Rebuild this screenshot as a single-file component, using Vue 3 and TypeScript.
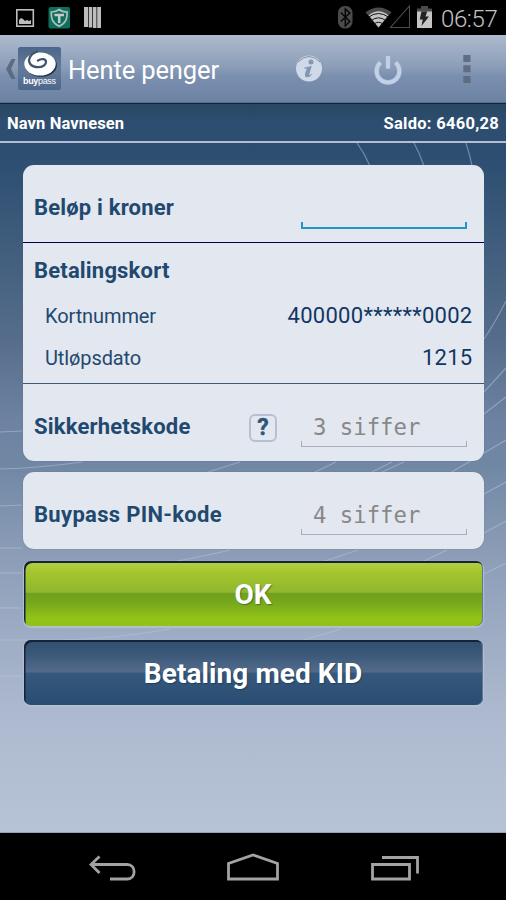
<script setup lang="ts">
import { ref } from 'vue'

const amount = ref('')
const cvc = ref('')
const pin = ref('')
const card = [
  { label: 'Kortnummer', value: '400000******0002' },
  { label: 'Utløpsdato', value: '1215' },
]
const arcs: string[] = [
  'M357 0Q365 11 370 23', 'M414 0Q420 11 424 23', 'M466 0Q470 12 472 23',
  'M506 158Q495 180 484 196', 'M506 225L484 249', 'M506 254L484 271',
  'M506 297L450 330', 'M506 339L484 351', 'M506 378L484 390', 'M506 420L484 431',
  'M336 319L313 330', 'M392 319L370 330', 'M404 319L380 330', 'M240 319L205 330',
  'M0 289L22 288', 'M0 326Q40 325 82 319', 'M0 363L22 362', 'M0 405H22',
  'M230 407Q205 413 172 419', 'M358 407L322 419', 'M447 407L422 419',
  'M0 430H22', 'M0 465H22', 'M0 497H65Q120 495 170 486', 'M341 486L300 498', 'M0 533H22',
]
</script>

<template>
  <div class="screen">
    <header class="status">
      <svg class="status-left" width="110" height="35" viewBox="0 0 110 35">
        <rect x="16.8" y="9.8" width="16.5" height="16.4" fill="none" stroke="#bdbdbd" stroke-width="1.6" />
        <path d="M19 24V20l2-2 2 1 2 2 2-1 2 1 2-1v4z" fill="#bdbdbd" />
        <rect x="48.5" y="7" width="21.5" height="21.5" rx="2" fill="#0d705e" />
        <path d="M59.2 9.5C56 12 53 12 51.2 12c0 6.500 1 11 8 14.300 7-3.300 8-7.800 8-14.300C65 12 62 12 59.200 9.500z" fill="none" stroke="#b3bdbb" stroke-width="1.7" />
        <path d="M54.500 15h9.500M59.200 15v8" stroke="#c4cbc9" stroke-width="2.500" />
        <path d="M84 7h4v20h-4zM88.700 7h3.600v20.500h-3.600zM93 7h3.500v21H93zM97.200 7h3.800v21h-3.800z" fill="#bdbdbd" />
      </svg>
      <div class="status-right">
        <svg width="100" height="35" viewBox="0 0 100 35">
          <rect x="1" y="6" width="14.500" height="22.500" rx="6.500" fill="#4b4b4b" />
          <path d="M3.800 12.500l9 9-4.500 4.200V9l4.500 4-9 8.500" fill="none" stroke="#080808" stroke-width="1.500" />
          <path d="M28.500 12.300Q41.500 2.500 54.500 12.300L41.500 27.500z" fill="#4b4b4b" />
          <path d="M31.700 15.200Q41.500 7.500 51.300 15.200L41.500 27.500z" fill="#c4c4c4" />
          <path d="M31 17.500Q41.500 9.500 52 17.500M33 21.500Q41.500 14 50 21.500M37 24Q41.500 20.500 46 24" fill="none" stroke="#111" stroke-width="1" />
          <path d="M53.500 27.500H72.500V6z" fill="none" stroke="#4b4b4b" stroke-width="1.100" />
          <path d="M84 6h7v2.500h4V12H80V8.500h4z" fill="#4b4b4b" />
          <path d="M80 11.500h15V28H80z" fill="#c4c4c4" />
          <path d="M84.500 11.500h5.700l-1.700 5h3.500l-7.500 9.500 1.200-6.500h-3z" fill="#222" />
        </svg>
        <span class="clock">06:57</span>
      </div>
    </header>

    <nav class="action-bar">
      <svg class="up" width="11" height="22" viewBox="0 0 11 22"><path d="M5.500 1H9.500L5 11l4.500 10H5.500L0 11z" fill="#5d6b80" /></svg>
      <svg class="logo" width="43" height="43" viewBox="0 0 43 43">
        <defs><linearGradient id="tile" x2="0" y2="1"><stop stop-color="#4d6588" /><stop offset=".5" stop-color="#637b9b" /><stop offset="1" stop-color="#4e678a" /></linearGradient></defs>
        <rect width="43" height="43" rx="2.500" fill="url(#tile)" />
        <ellipse cx="23.200" cy="18.200" rx="15.700" ry="11.600" fill="#24344a" />
        <ellipse cx="22" cy="17" rx="15.700" ry="11.500" fill="#fff" />
        <path d="M19 4.500C12 7.500 10 12 11.500 15.500c2 5 10 6 14.500 3 3-2.200 2.500-5.500-.5-6.300-2-.5-4 .3-5.500 1.300" fill="none" stroke="#40546f" stroke-width="2.300" stroke-linecap="round" />
        <text x="5" y="37" fill="#fff" class="logo-text" textLength="33"><tspan class="heavy">buy</tspan>pass</text>
      </svg>
      <h1>Hente penger</h1>
      <svg class="info" width="28" height="28" viewBox="0 0 28 28">
        <circle cx="14" cy="14.500" r="13" fill="#cfd9e7" />
        <path d="M3 8Q14-3 25 8" fill="none" stroke="#64748b" stroke-width=".7" />
        <circle cx="16" cy="8" r="2.500" fill="#8497b1" />
        <path d="M9.500 13.500q4-1 7.300-1.500l-2.600 8.500q0 1.500 3.300-1.200-2 4-5.500 4-3-.2-1.800-4l1.600-4.800H9z" fill="#8497b1" />
      </svg>
      <svg class="power" width="30" height="30" viewBox="0 0 30 30">
        <path d="M7.500 7.500a11.400 11.400 0 1 0 15 0M15 1v12.500" fill="none" stroke="#a5bfe2" stroke-width="4.600" />
        <path d="M7.500 7.500a11.400 11.400 0 1 0 15 0M15 1v12.500" fill="none" stroke="#c4d1e4" stroke-width="3.600" />
      </svg>
      <svg class="more" width="8" height="28" viewBox="0 0 8 28"><path d="M.3 0h7.200v7H.3zM.3 10.200h7.200v7H.3zM.3 21h7.200v7H.3z" fill="#5f6d82" /></svg>
    </nav>

    <div class="account">
      <span class="name">Navn Navnesen</span>
      <span class="balance">Saldo: 6460,28</span>
    </div>

    <main class="content">
      <svg class="arcs" width="506" height="690" viewBox="0 0 506 690">
        <path v-for="d in arcs" :key="d" :d="d" />
      </svg>
      <form class="form" @submit.prevent>
        <section class="panel">
          <label class="row amount">
            <b class="l-amount">Beløp i kroner</b>
            <span class="field active"><input v-model="amount" /></span>
          </label>
          <div class="card-info">
            <h2>Betalingskort</h2>
            <div v-for="item in card" :key="item.label" class="detail">
              <span>{{ item.label }}</span><span class="value">{{ item.value }}</span>
            </div>
          </div>
          <div class="row code">
            <b class="l-code">Sikkerhetskode</b>
            <button class="help" type="button">?</button>
            <span class="field"><input v-model="cvc" placeholder="3 siffer" /></span>
          </div>
        </section>
        <section class="panel">
          <label class="row pin">
            <b class="l-pin">Buypass PIN-kode</b>
            <span class="field"><input v-model="pin" placeholder="4 siffer" /></span>
          </label>
        </section>
        <button class="btn ok" type="button"><span>OK</span></button>
        <button class="btn kid" type="button"><span>Betaling med KID</span></button>
      </form>
    </main>

    <footer class="navbar">
      <svg width="506" height="67" viewBox="0 0 506 67" fill="none" stroke="#a3a3a3" stroke-width="2.800">
        <path d="M91 31.500H127c9.500 0 9.500 14.500 0 14.500H110M99.500 23.500L91 31.500l8.500 8.500" />
        <path d="M228.500 46V30.500L253 22l24.500 8.500V46z" />
        <path d="M372.500 31.500h37V46h-37zM382 24.500h35.500V40.500" />
      </svg>
    </footer>
  </div>
</template>

<style>
body { margin: 0; background: #000; }
</style>

<style scoped>
* { box-sizing: border-box; }
.screen { width: 506px; height: 900px; display: flex; flex-direction: column; overflow: hidden; font-family: Roboto, "Liberation Sans", sans-serif; background: #000; }
.status { height: 35px; display: flex; justify-content: space-between; flex: none; }
.status-right { display: flex; width: 169px; }
.status-right svg { flex: none; }
.clock { flex: 1; margin-left: 4px; font-size: 24px; line-height: 38px; color: #c4c4c4; font-weight: 300; white-space: nowrap; letter-spacing: -.4px; }
.action-bar { height: 69px; flex: none; display: flex; align-items: flex-start; padding-left: 6px; border-bottom: 1px solid #152237; background: linear-gradient(#aebbce, #8a9cb7 48%, #7b90af 60%, #6d83a4 98%, #4d6384); }
.up { margin-top: 23px; }
.logo { margin: 12px 0 0 1px; }
.logo-text { font: 9px "Liberation Sans", sans-serif; }
.heavy { font-weight: 700; }
h1 { width: 155px; margin: 19px 0 0 7px; color: #fff; font-size: 25.500px; font-weight: 400; line-height: 32px; white-space: nowrap; letter-spacing: -.12px; }
.info { margin: 19px 0 0 72px; }
.power { margin: 20px 0 0 50px; }
.more { margin: 20px 0 0 60px; }
.account { height: 39px; flex: none; display: flex; justify-content: space-between; padding: 0 7px; background: linear-gradient(#294763, #2d4e70 50%); border-bottom: 2px solid #b2bfd5; color: #fff; font-size: 16.500px; font-weight: 700; line-height: 39px; }
.name { letter-spacing: .13px; }
.balance { letter-spacing: .28px; }
.content { position: relative; height: 690px; flex: none; background: linear-gradient(#2d4d70 0, #2f5072 4%, #566e8b 29%, #6d82a1 40%, #7188a4 47%, #8d9db8 60%, #9cabc3 70%, #aebacf 84%, #b6c3d6 99.800%, #8090a7 100%); }
.arcs { position: absolute; inset: 0; fill: none; stroke: #b9c8de; stroke-opacity: .48; stroke-width: 1.200; }
.form { position: relative; display: flex; flex-direction: column; padding: 22px 22px 0 22.500px; }
.panel { background: #e3e7ef; border-radius: 11px; margin-bottom: 11px; margin-right: .5px; color: #1f496f; box-shadow: 0 0 1px #466383; }
.row { display: flex; align-items: flex-start; padding-left: 11.500px; }
.row b, h2 { font-size: 22px; line-height: 26px; font-weight: 700; white-space: nowrap; margin: 0; letter-spacing: .18px; }
.row .l-pin { letter-spacing: .32px; }
.amount { height: 78px; border-bottom: 1.500px solid #050050; }
.amount b { margin-top: 30px; }
.card-info { height: 141px; padding: 15px 11px 0 11.500px; border-bottom: 1.500px solid #3d5977; }
.detail { display: flex; justify-content: space-between; padding-left: 11px; margin-top: 18px; height: 24px; font-size: 20px; line-height: 28px; letter-spacing: -.1px; }
.value { font-size: 22px; line-height: 28px; color: #103664; letter-spacing: .28px; }
.code { height: 77px; }
.code b, .pin b { margin-top: 30px; }
.field { margin: 57px 16.500px 0 auto; width: 166px; height: 6px; border: 1px solid #a9afb8; border-top: 0; display: flex; align-items: flex-end; }
.active { height: 7px; border: 2px solid #1e96ca; border-top: 0; }
.field input { width: 100%; height: 30px; flex: none; margin-bottom: 4px; border: 0; outline: 0; background: none; padding: 0 0 0 11px; color: #1f496f; font: 22.300px "DejaVu Sans Mono", monospace; }
.field input::placeholder { color: #888; opacity: 1; }
.code .field { margin-left: 24px; }
.help { width: 28px; height: 28px; margin: 29.500px 0 0 auto; padding: 0; border: 2px solid #b6c0d1; border-radius: 6px; background: #e3e7ef; color: #315579; font: 700 23px/24px Roboto, sans-serif; -webkit-text-stroke: .4px #315579; }
.pin { height: 77px; }
.btn { height: 65px; width: 459px; margin: 1px 0 13px 1px; padding: 0; border: 0; border-radius: 7px; color: #fff; font: 700 28px/67px Roboto, sans-serif; text-shadow: 1px 1px 1px rgb(0 30 60 / 40%); box-shadow: inset 1.500px 2px .5px #14233a, inset -1px 0 .5px #5d789a, 0 1px 1px 1px #b4bfd0; }
.btn span { display: block; white-space: nowrap; }
.ok { background: linear-gradient(#b8cf45, #a6c62e 15%, #8fb82d 48%, #6fa01d 50%, #76a91b 65%, #92c318 88%, #91c217); }
.kid { background: linear-gradient(#304e6f, #395777 20%, #526b8b 49%, #36587c 51%, #294c72); letter-spacing: .07px; }
.navbar { height: 67px; flex: none; }
</style>
